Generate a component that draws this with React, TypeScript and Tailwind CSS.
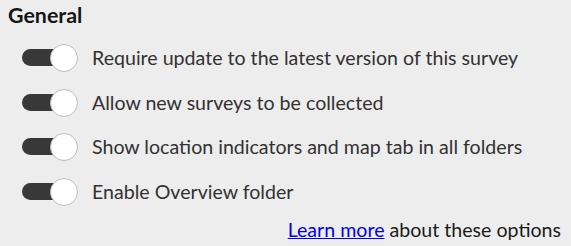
const OPTIONS = [
  "Require update to the latest version of this survey",
  "Allow new surveys to be collected",
  "Show location indicators and map tab in all folders",
  "Enable Overview folder",
];

function Toggle() {
  return (
    <div className="relative h-[28px] w-[56px] shrink-0">
      <div className="absolute left-0 top-[5px] h-[17px] w-[44px] rounded-full bg-[#383838]" />
      <div className="absolute left-[28px] top-0 h-[28px] w-[28px] rounded-full border border-[#bdbdbd] bg-white" />
    </div>
  );
}

export default function App() {
  return (
    <div className="h-[246px] w-[571px] bg-[#ededed] pl-2 pr-[10px] pt-[1px] font-['Lato',sans-serif] text-[#323232]">
      <h2 className="text-[21.4px] font-bold leading-[28px] text-[#151515]">General</h2>
      <div className="mt-[15px] flex flex-col gap-[16.7px] pl-[14px]">
        {OPTIONS.map((o) => (
          <div key={o} className="flex items-center gap-[14px]">
            <Toggle />
            <span className="text-[19.6px] leading-[28px]">{o}</span>
          </div>
        ))}
      </div>
      <p className="mt-[10px] text-right text-[19.6px] leading-[28px] text-[#1a1a1a]">
        <a href="#" className="text-[#0000ee] underline">Learn more</a> about these options
      </p>
    </div>
  );
}
